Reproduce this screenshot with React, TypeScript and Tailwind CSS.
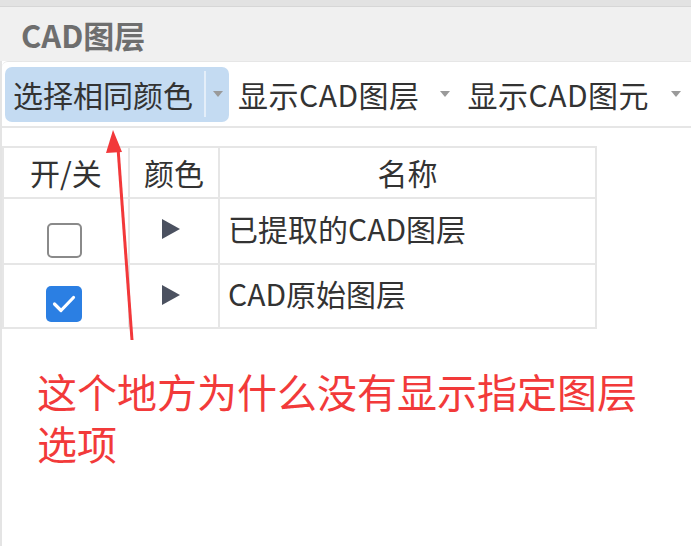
import React from 'react';

const font = { fontFamily: '"Noto Sans CJK SC", "Noto Sans", sans-serif' };

const Caret = () => (
  <svg width="10" height="6" viewBox="0 0 10 6" className="shrink-0">
    <path d="M0 0 L10 0 L5 6 Z" fill="#9a9a9a" />
  </svg>
);

const Play = () => (
  <svg width="18" height="20" viewBox="0 0 18 20">
    <path d="M0 0 L18 10 L0 20 Z" fill="#4b5160" />
  </svg>
);

const rows = [
  { on: false, name: '已提取的CAD图层' },
  { on: true, name: 'CAD原始图层' },
];

export default function App() {
  return (
    <div className="relative w-[691px] h-[546px] overflow-hidden bg-white" style={font}>
      <div className="h-[7px] bg-[#e2e2e2] border-b border-[#d6d6d6]" />
      <div className="h-[54px] bg-[#f0f0f0] flex items-center pl-[21px]">
        <span className="text-[31px] font-bold text-[#6e6e6e] leading-none">CAD图层</span>
      </div>

      <div className="border-l-2 border-[#e4e4e4] h-[485px]">
        <div className="h-[67px] bg-white border-t border-b-2 border-[#e6e6e6] rounded-tl-md flex items-center pl-[3px] text-[30px] text-[#333]">
          <div className="h-[55px] w-[224px] bg-[#c4dbf2] rounded-[7px] flex items-center">
            <span className="pl-[8px] w-[199px] whitespace-nowrap">选择相同颜色</span>
            <div className="w-[2px] h-[46px] bg-[#e4eef9]" />
            <div className="flex-1 flex justify-center"><Caret /></div>
          </div>
          <span className="ml-[9px] whitespace-nowrap tracking-[0.5px]">显示CAD图层</span>
          <span className="ml-[20px]"><Caret /></span>
          <span className="ml-[18px] whitespace-nowrap tracking-[0.5px]">显示CAD图元</span>
          <span className="ml-[22px]"><Caret /></span>
        </div>

        <div className="mt-[18px] w-[595px] text-[30px] text-[#333]">
          <div className="grid grid-cols-[126px_90px_1fr] border-2 border-[#e6e6e6]">
            <div className="h-[51px] flex items-center justify-center border-r-2 border-b-2 border-[#e6e6e6]">开/关</div>
            <div className="h-[51px] flex items-center justify-center border-r-2 border-b-2 border-[#e6e6e6]">颜色</div>
            <div className="h-[51px] flex items-center justify-center border-b-2 border-[#e6e6e6]">名称</div>
            {rows.map((r, i) => (
              <React.Fragment key={i}>
                <div className={`flex items-end justify-center pb-[5px] pr-[4px] border-r-2 border-[#e6e6e6] ${i === 0 ? 'h-[66px] border-b-2' : 'h-[62px]'}`}>
                  {r.on ? (
                    <div className="w-[36px] h-[36px] rounded-[5px] bg-[#2b7fe3] flex items-center justify-center">
                      <svg width="24" height="20" viewBox="0 0 24 20">
                        <path d="M2.5 10 L9 16.5 L21.5 3.5" stroke="#fff" strokeWidth="3.2" fill="none" strokeLinecap="round" strokeLinejoin="round" />
                      </svg>
                    </div>
                  ) : (
                    <div className="w-[35px] h-[35px] rounded-[5px] border-2 border-[#8a8a8a] bg-white" />
                  )}
                </div>
                <div className={`flex items-start justify-center pt-[20px] pr-[6px] border-r-2 border-[#e6e6e6] ${i === 0 ? 'h-[66px] border-b-2' : 'h-[62px]'}`}>
                  <Play />
                </div>
                <div className={`flex items-center pl-[8px] pb-[6px] whitespace-nowrap border-[#e6e6e6] ${i === 0 ? 'h-[66px] border-b-2' : 'h-[62px]'}`}>
                  {r.name}
                </div>
              </React.Fragment>
            ))}
          </div>
        </div>

        <p className="mt-[36px] ml-[35px] w-[620px] text-[40px] leading-[52px] text-[#f23a3a]">
          这个地方为什么没有显示指定图层选项
        </p>
      </div>

      <svg className="absolute left-0 top-0 pointer-events-none" width="691" height="546">
        <path d="M132 340 L118 148" stroke="#f2383a" strokeWidth="3" fill="none" />
        <path d="M113 130 L106 153 L122 152 Z" fill="#f2383a" />
      </svg>
    </div>
  );
}
